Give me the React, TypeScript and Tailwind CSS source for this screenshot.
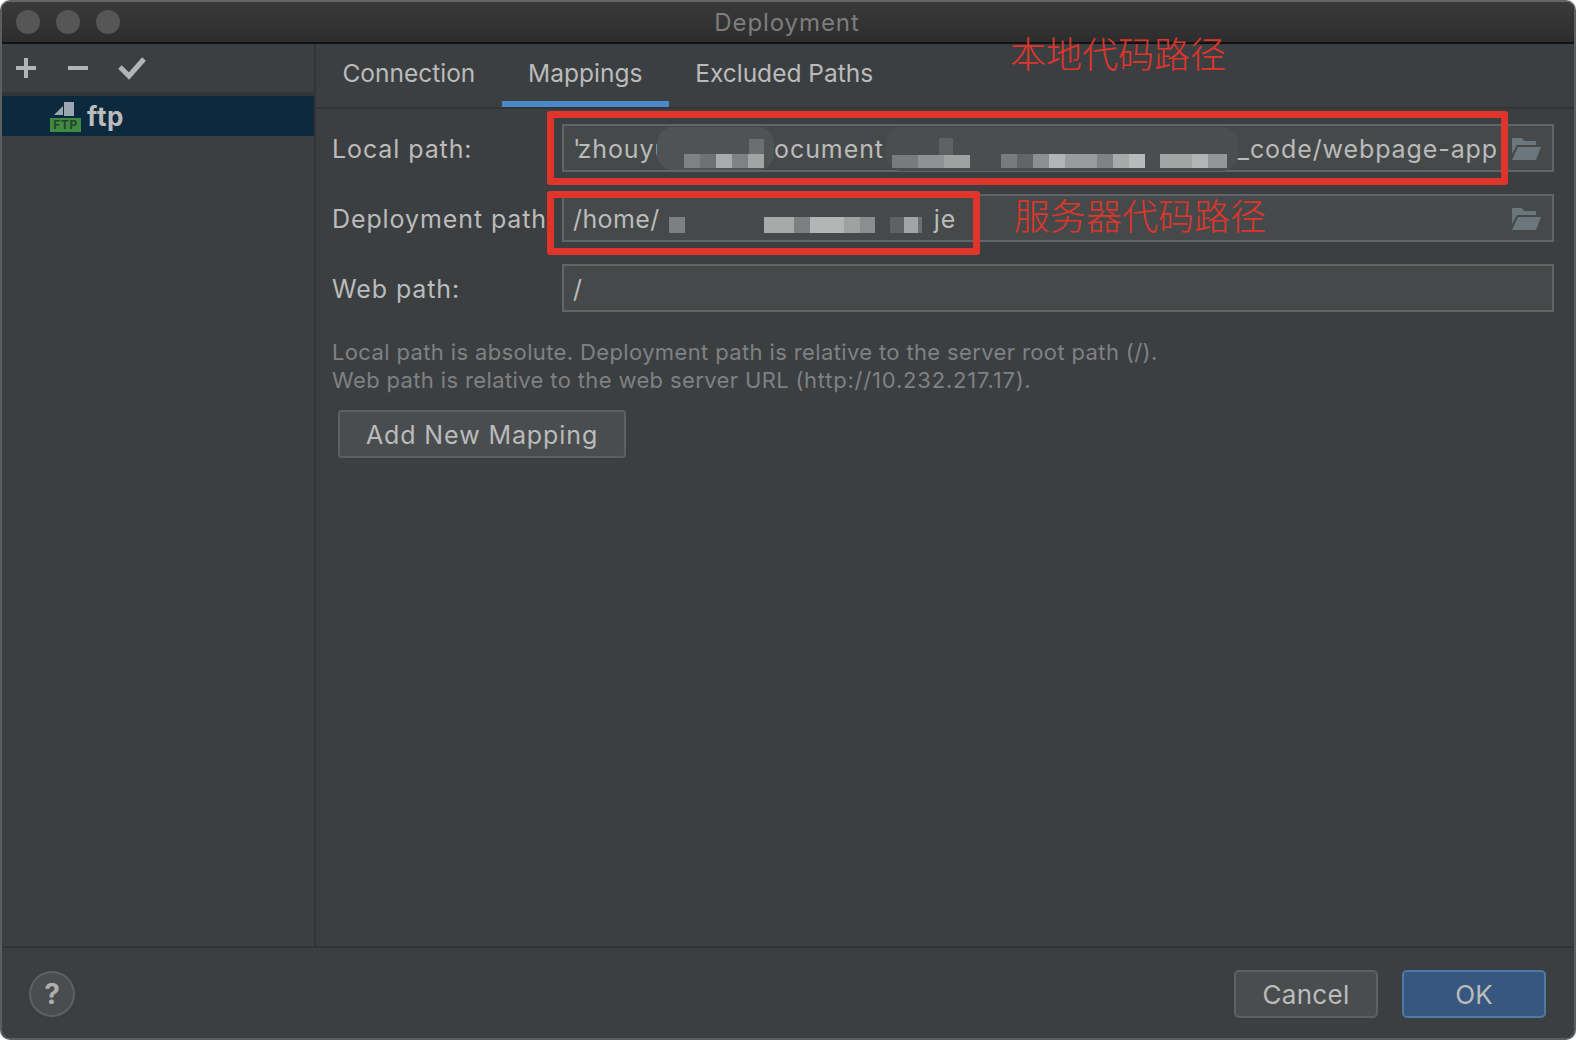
import React from "react";

const blocks: [number, number, number, number, string][] = [
  // local path, first smear
  [684, 154, 16, 14, "#7f8283"], [700, 154, 16, 14, "#6f7273"], [716, 154, 16, 14, "#a9acac"], [732, 154, 16, 14, "#7f8283"], [748, 154, 16, 14, "#b0b2b2"], [749, 139, 15, 15, "#6c6f70"], [748, 154, 16, 14, "#a3a5a5"],
  // local path, second smear
  [892, 155, 26, 13, "#787b7c"], [918, 155, 26, 13, "#8f9293"], [944, 155, 26, 13, "#a0a2a2"], [939, 138, 14, 17, "#5f6263"],
  [1001, 154, 16, 14, "#787b7c"], [1017, 154, 16, 14, "#626566"], [1033, 154, 16, 14, "#8d9090"], [1049, 154, 16, 14, "#b3b5b5"], [1065, 154, 32, 14, "#999c9c"], [1097, 154, 16, 14, "#808384"], [1113, 154, 16, 14, "#a8aaaa"], [1129, 154, 16, 14, "#b8baba"],
  [1160, 154, 32, 14, "#a3a5a5"], [1192, 154, 16, 14, "#b3b5b5"], [1208, 154, 19, 14, "#939696"],
  // deployment path
  [669, 217, 16, 16, "#7d8081"], [764, 217, 30, 16, "#a8aaaa"], [794, 217, 16, 16, "#7d8081"], [810, 217, 34, 16, "#b3b5b5"], [844, 217, 16, 16, "#a0a2a2"], [860, 217, 15, 16, "#8b8e8f"],
  [890, 217, 14, 16, "#5f6263"], [904, 217, 14, 16, "#a3a5a5"], [918, 217, 4, 16, "#6c6f70"],
];

function Folder() {
  return (
    <svg width="30" height="23" viewBox="0 0 30 23" className="shrink-0">
      <path d="M1 1h10l2 3h12v4H6L1 17z" fill="#6b777c" />
      <path d="M7 10h23l-5 13H1z" fill="#6b777c" />
    </svg>
  );
}

function Field({ children, folder }: { children?: React.ReactNode; folder?: boolean }) {
  return (
    <div className="flex-1 h-[48px] border-2 border-[#646464] bg-[#45494a] flex items-center pl-[9px] pr-[11px] text-[25px] tracking-[0.9px] text-[#bbbbbb] overflow-hidden">
      <div className="flex-1 flex items-center min-w-0 pt-[3px]">{children}</div>
      {folder && <Folder />}
    </div>
  );
}

function Row({ label, children }: { label: string; children: React.ReactNode }) {
  return (
    <div className="flex items-center">
      <div className="w-[230px] shrink-0 pt-[4px] text-[25px] tracking-[0.9px] text-[#bbbbbb] whitespace-nowrap overflow-hidden">{label}</div>
      {children}
    </div>
  );
}

export default function App() {
  return (
    <div
      className="relative w-[1576px] h-[1040px] flex flex-col overflow-hidden bg-[#3c3f41] rounded-[10px] border-2 border-[#5c5e60] border-t-[#666666]"
      style={{ fontFamily: '"Inter", "Noto Sans CJK SC", sans-serif' }}
    >
      <div className="relative h-[42px] shrink-0 flex items-center bg-gradient-to-b from-[#3a3a3a] to-[#2d2d2d] border-b-2 border-[#121212]">
        <div className="flex gap-[16px] pl-[14px]">
          <div className="w-[24px] h-[24px] rounded-full bg-[#565656]" />
          <div className="w-[24px] h-[24px] rounded-full bg-[#565656]" />
          <div className="w-[24px] h-[24px] rounded-full bg-[#565656]" />
        </div>
        <div className="absolute inset-0 flex items-center justify-center pt-[2px] pr-[2px] text-[24px] tracking-[0.9px] text-[#7d7d7d]">Deployment</div>
      </div>

      <div className="flex-1 flex min-h-0">
        <aside className="w-[314px] shrink-0 border-r-2 border-[#323435] flex flex-col">
          <div className="h-[52px] flex items-center pl-[13px] border-b-4 border-[#333536]">
            <svg width="140" height="28" viewBox="0 0 140 28" fill="none" stroke="#b4b4b4" strokeWidth="4">
              <path d="M11 4v20M1 14h20" />
              <path d="M53 14h20" />
              <path d="M105 13l9 9 15-17" strokeWidth="5" />
            </svg>
          </div>
          <div className="h-[40px] bg-[#0d293e] flex items-center pl-[48px] gap-[6px]">
            <div className="w-[31px] h-[31px] relative shrink-0">
              <svg width="31" height="17" viewBox="0 0 31 17" className="absolute left-0 top-0">
                <path d="M4 14l9-9v9z" fill="#9aa7b0" />
                <path d="M14 1h10v14H14z" fill="#9aa7b0" />
              </svg>
              <div className="absolute left-0 right-0 bottom-0 h-[14px] bg-[#3f8a41] text-[12px] leading-[14px] font-bold text-center tracking-[0.5px] text-[#274427]">FTP</div>
            </div>
            <span className="text-[26px] font-bold tracking-[0.6px] text-[#bbbbbb]">ftp</span>
          </div>
        </aside>

        <main className="flex-1 min-w-0 flex flex-col">
          <div className="h-[65px] shrink-0 flex border-b-2 border-[#323435] text-[24.5px] text-[#bbbbbb]">
            <div className="px-[26.4px] flex items-center pb-[5px]">Connection</div>
            <div className="relative px-[26.4px] flex items-center pb-[5px]">
              Mappings
              <div className="absolute left-0 right-0 bottom-0 h-[6px] bg-[#4a88c7]" />
            </div>
            <div className="px-[26.4px] flex items-center pb-[5px]">Excluded Paths</div>
          </div>
          <div className="flex flex-col gap-[22px] pl-[16px] pr-[20px] pt-[15px]">
            <Row label="Local path:">
              <Field folder>
                <span>
                  <span className="tracking-[-3px]">'</span>zhouyu
                </span>
                <span className="ml-[104px]">ocument</span>
                <span className="ml-auto mr-[13px]">_code/webpage-app</span>
              </Field>
            </Row>
            <Row label="Deployment path:">
              <Field folder>
                <span className="tracking-[0.4px]">/home/</span>
                <span className="ml-[274px]">je</span>
              </Field>
            </Row>
            <Row label="Web path:">
              <Field>/</Field>
            </Row>
          </div>
          <div className="pl-[16px] mt-[26px] text-[22px] tracking-[0.37px] leading-[28px] text-[#7f8183]">
            <div>Local path is absolute. Deployment path is relative to the server root path (/).</div>
            <div>
              Web path is relative to the web server URL (<span className="tracking-[0.8px]">http://10.232.217.17</span>).
            </div>
          </div>
          <button className="ml-[22px] mt-[16px] w-[288px] h-[48px] pt-[3px] rounded-[4px] border-2 border-[#5e6060] bg-[#4a4d4f] text-[25px] tracking-[0.9px] text-[#bbbbbb]">Add New Mapping</button>
        </main>
      </div>

      <footer className="h-[92px] shrink-0 border-t-2 border-[#323435] flex items-center justify-between pl-[27px] pr-[28px] pt-[2px]">
        <div className="w-[46px] h-[46px] rounded-full border-2 border-[#5e6060] bg-[#4a4d4f] flex items-center justify-center text-[28px] font-bold text-[#aeaeae]">?</div>
        <div className="flex gap-[24px]">
          <button className="w-[144px] h-[48px] pt-[1px] rounded-[5px] border-2 border-[#5e6060] bg-[#4a4d4f] text-[26px] tracking-[0.3px] text-[#bbbbbb]">Cancel</button>
          <button className="w-[144px] h-[48px] pt-[1px] rounded-[5px] border-2 border-[#4c7aa3] bg-[#365880] text-[26px] text-[#bbbbbb]">OK</button>
        </div>
      </footer>

      {/* retouched areas drawn over the shot */}
      <div className="absolute left-[655px] top-[125px] w-[117px] h-[43px] rounded-[16px] bg-[#505354]" />
      <div className="absolute left-[884px] top-[125px] w-[352px] h-[44px] rounded-[16px] bg-[#4b4e4f]" />
      <div className="absolute left-[660px] top-[198px] w-[270px] h-[40px] rounded-[14px] bg-[#45494a]" />
      {blocks.map(([x, y, w, h, c], i) => (
        <div key={i} className="absolute" style={{ left: x - 2, top: y - 2, width: w, height: h, background: c }} />
      ))}

      <div className="absolute left-[545px] top-[109px] w-[961px] h-[74px] rounded-[3px] border-[7px] border-[#e0352b]" />
      <div className="absolute left-[545px] top-[189px] w-[433px] h-[64px] rounded-[3px] border-[7px] border-[#e0352b]" />
      <div className="absolute left-[1008px] top-[30px] text-[36px] leading-[46px] text-[#e0352b] font-light whitespace-nowrap">本地代码路径</div>
      <div className="absolute left-[1012px] top-[192px] text-[36px] leading-[46px] text-[#e0352b] font-light whitespace-nowrap">服务器代码路径</div>
    </div>
  );
}
